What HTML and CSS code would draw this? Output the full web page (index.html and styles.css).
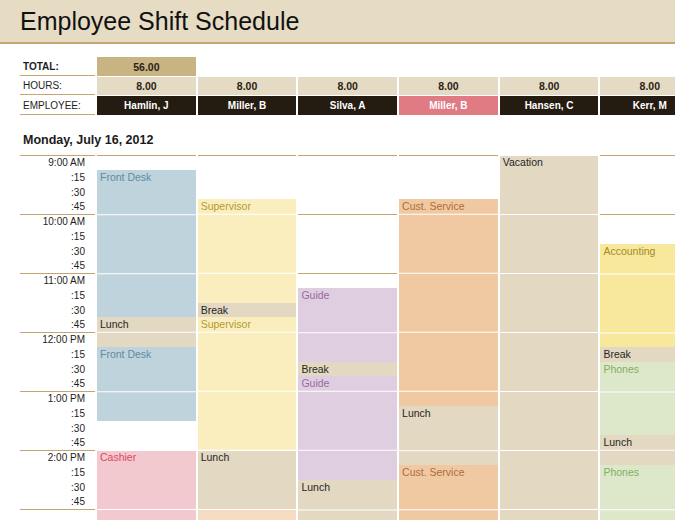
FILE: index.html
```html
<!DOCTYPE html>
<html lang="en">
<head>
<meta charset="utf-8">
<title>Employee Shift Schedule</title>
<link rel="stylesheet" href="styles.css">
</head>
<body>
<h1 class="title">Employee Shift Schedule</h1>

<div class="summary">
  <div class="lbl strong">TOTAL:</div>
  <div class="cell total">56.00</div>
  <div class="fill"></div>

  <div class="lbl">HOURS:</div>
  <div class="cell hrs">8.00</div>
  <div class="cell hrs">8.00</div>
  <div class="cell hrs">8.00</div>
  <div class="cell hrs">8.00</div>
  <div class="cell hrs">8.00</div>
  <div class="cell hrs">8.00</div>

  <div class="lbl">EMPLOYEE:</div>
  <div class="cell emp">Hamlin, J</div>
  <div class="cell emp">Miller, B</div>
  <div class="cell emp">Silva, A</div>
  <div class="cell emp dup">Miller, B</div>
  <div class="cell emp">Hansen, C</div>
  <div class="cell emp">Kerr, M</div>
</div>

<h2 class="date">Monday, July 16, 2012</h2>

<div class="sched">
  <div class="col times">
    <div class="t">9:00 AM</div><div class="t">:15</div><div class="t">:30</div><div class="t">:45</div>
    <div class="t">10:00 AM</div><div class="t">:15</div><div class="t">:30</div><div class="t">:45</div>
    <div class="t">11:00 AM</div><div class="t">:15</div><div class="t">:30</div><div class="t">:45</div>
    <div class="t">12:00 PM</div><div class="t">:15</div><div class="t">:30</div><div class="t">:45</div>
    <div class="t">1:00 PM</div><div class="t">:15</div><div class="t">:30</div><div class="t">:45</div>
    <div class="t">2:00 PM</div><div class="t">:15</div><div class="t">:30</div><div class="t">:45</div>
  </div>

  <div class="col">
    <div class="b fd" style="--s:2;--n:10">Front Desk</div>
    <div class="b br" style="--s:12;--n:2">Lunch</div>
    <div class="b fd" style="--s:14;--n:5">Front Desk</div>
    <div class="b ca" style="--s:21;--n:5">Cashier</div>
  </div>

  <div class="col">
    <div class="b sup" style="--s:4;--n:7">Supervisor</div>
    <div class="b br" style="--s:11;--n:1">Break</div>
    <div class="b sup" style="--s:12;--n:9">Supervisor</div>
    <div class="b br" style="--s:21;--n:4">Lunch</div>
    <div class="b pe" style="--s:25;--n:1"></div>
  </div>

  <div class="col">
    <div class="b gd" style="--s:10;--n:5">Guide</div>
    <div class="b br" style="--s:15;--n:1">Break</div>
    <div class="b gd" style="--s:16;--n:7">Guide</div>
    <div class="b br" style="--s:23;--n:3">Lunch</div>
  </div>

  <div class="col">
    <div class="b cs" style="--s:4;--n:14">Cust. Service</div>
    <div class="b br" style="--s:18;--n:4">Lunch</div>
    <div class="b cs" style="--s:22;--n:4">Cust. Service</div>
  </div>

  <div class="col">
    <div class="b br" style="--s:1;--n:25">Vacation</div>
  </div>

  <div class="col">
    <div class="b acc" style="--s:7;--n:7">Accounting</div>
    <div class="b br" style="--s:14;--n:1">Break</div>
    <div class="b ph" style="--s:15;--n:5">Phones</div>
    <div class="b br" style="--s:20;--n:2">Lunch</div>
    <div class="b ph" style="--s:22;--n:4">Phones</div>
  </div>
</div>
</body>
</html>
```

FILE: styles.css
```css
* { box-sizing: border-box; }

html, body {
  margin: 0;
  padding: 0;
  background: #fff;
  overflow: hidden;
}

body {
  width: 675px;
  height: 520px;
  font-family: "Liberation Sans", Arial, sans-serif;
  color: #222;
}

.title {
  margin: 0;
  height: 44px;
  padding-left: 20px;
  background: #e6dbc3;
  border-bottom: 2px solid #c6a673;
  font-size: 25px;
  font-weight: normal;
  line-height: 43px;
  color: #111;
}

/* ---------- summary table ---------- */
.summary {
  display: grid;
  grid-template-columns: 75px repeat(6, 98.7px);
  grid-template-rows: 19px 18px 19px;
  column-gap: 2px;
  row-gap: 1px;
  margin: 13px 0 0 20px;
}

.lbl {
  display: flex;
  align-items: center;
  padding-left: 3px;
  font-size: 10px;
  color: #1d1d1d;
  border-bottom: 1px solid #c6a673;
}

.lbl.strong { font-weight: bold; }

.cell {
  display: flex;
  align-items: center;
  justify-content: center;
  font-weight: bold;
}

.fill { grid-column: 3 / -1; }

.total {
  background: #c8b382;
  color: #2b2416;
  font-size: 10.5px;
}

.hrs {
  background: #e5dac3;
  color: #2b2416;
  font-size: 10.5px;
}

.emp {
  background: #241c10;
  color: #fff;
  font-size: 10px;
}

.emp.dup { background: #e07a83; }

/* ---------- date ---------- */
.date {
  margin: 17px 0 7px 20px;
  padding-left: 3px;
  height: 16px;
  font-size: 12.5px;
  line-height: 16px;
  font-weight: bold;
  color: #1b1b1b;
}

/* ---------- schedule ---------- */
.sched {
  display: grid;
  grid-template-columns: 75px repeat(6, 98.7px);
  column-gap: 2px;
  margin-left: 20px;
}

.col {
  display: grid;
  grid-template-rows: repeat(25, 14.75px);
  background-image: linear-gradient(#c6a470 0 1.5px, transparent 1.5px);
  background-size: 100% 59px;
  background-repeat: repeat-y;
}

.t {
  padding: 1px 10px 0 0;
  text-align: right;
  font-size: 10px;
  line-height: 13.75px;
  color: #1d1d1d;
}

.b {
  grid-column: 1;
  grid-row: var(--s) / span var(--n);
  padding: 0 0 0 3px;
  font-size: 10.5px;
  line-height: 14.75px;
  white-space: nowrap;
  overflow: hidden;
  background-image: linear-gradient(#fff 0 1px, transparent 1px);
  background-size: 100% 59px;
  background-repeat: repeat-y;
  background-position: 0 calc((1 - var(--s)) * 14.75px);
}

.fd  { background-color: #bfd3dc; color: #5e8ca1; }
.sup { background-color: #faeebf; color: #b39a30; }
.br  { background-color: #e3d8c1; color: #262626; }
.gd  { background-color: #dfcde0; color: #9a6a9f; }
.cs  { background-color: #f0c9a3; color: #ae6c39; }
.acc { background-color: #f8e89c; color: #a18b26; }
.ph  { background-color: #dde8cb; color: #85ad5f; }
.ca  { background-color: #f2c9cf; color: #e0485d; }
.pe  { background-color: #f6dcc3; color: #c98a4b; }
```
